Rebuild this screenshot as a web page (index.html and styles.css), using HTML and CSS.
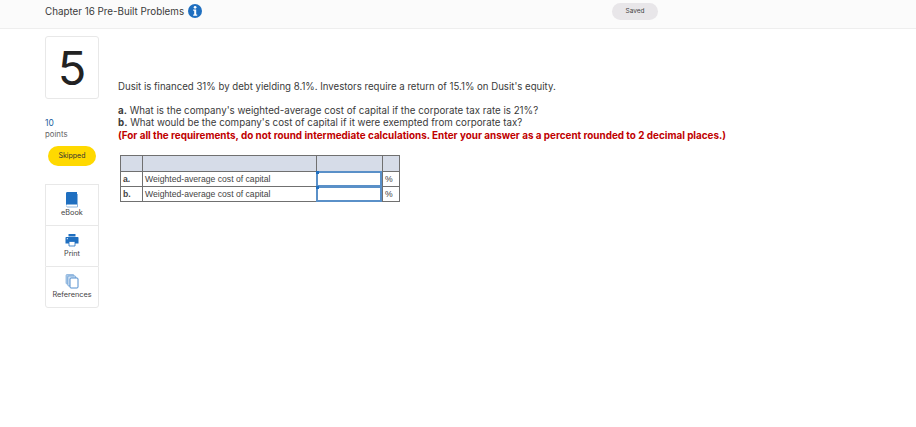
FILE: index.html
```html
<!DOCTYPE html>
<html lang="en">
<head>
<meta charset="utf-8">
<title>Chapter 16 Pre-Built Problems</title>
<link rel="stylesheet" href="styles.css">
</head>
<body>
<header class="topbar">
  <div class="title-group">
    <span class="title">Chapter 16 Pre-Built Problems</span>
    <svg class="info" viewBox="0 0 14 14" aria-hidden="true"><circle cx="7" cy="7" r="7" fill="#1f6fc0"/><circle cx="7.1" cy="3.3" r="1.35" fill="#fff"/><path d="M5.2 5.6h3v4.9h1v1.2H5.2v-1.2h1V6.8h-1z" fill="#fff"/></svg>
  </div>
  <span class="saved">Saved</span>
</header>
<main class="page">
  <aside class="sidebar">
    <div class="number">5</div>
    <div class="points"><span class="points-value">10</span><span class="points-label">points</span></div>
    <div class="status">Skipped</div>
    <nav class="tools">
      <div class="tool">
        <svg class="tool-icon" viewBox="0 0 16 16" aria-hidden="true"><path d="M2 1.400C2 .6 2.600 0 3.300 0H13v12.500H3.300C2.600 12.500 2 13 2 13.700z" fill="#1f6fc0"/><path d="M2.500 13.700c0 .7.400 1.300 1 1.300H13.500V2" fill="none" stroke="#8fb6de" stroke-width="1"/></svg>
        <span>eBook</span>
      </div>
      <div class="tool">
        <svg class="tool-icon" viewBox="0 0 16 16" aria-hidden="true"><path d="M4.500 1h7v2.500h-7z" fill="#1f6fc0"/><path d="M2.500 4h11c.6 0 1 .4 1 1v5.500h-13V5c0-.6.4-1 1-1z" fill="#1f6fc0"/><path d="M5 8.500h6v4.500H5z" fill="#fff" stroke="#1f6fc0" stroke-width=".8"/><circle cx="3.300" cy="5.700" r=".6" fill="#fff"/></svg>
        <span>Print</span>
      </div>
      <div class="tool">
        <svg class="tool-icon" viewBox="0 0 16 16" aria-hidden="true"><rect x="2" y=".5" width="8" height="9.500" rx="1" fill="#a9c8e8" stroke="#8ab2dc" stroke-width=".8"/><rect x="3.800" y="2" width="8" height="10" rx="1" fill="#d5e4f4" stroke="#6a9fd6" stroke-width=".8"/><rect x="6" y="4" width="8" height="10" rx="1" fill="#fff" stroke="#3f82c8" stroke-width=".9"/></svg>
        <span>References</span>
      </div>
    </nav>
  </aside>
  <section class="question">
    <p class="intro">Dusit is financed 31% by debt yielding 8.1%. Investors require a return of 15.1% on Dusit's equity.</p>
    <p class="parts">
      <span class="line"><b>a.</b> What is the company's weighted-average cost of capital if the corporate tax rate is 21%?</span>
      <span class="line"><b>b.</b> What would be the company's cost of capital if it were exempted from corporate tax?</span>
      <span class="line note">(For all the requirements, do not round intermediate calculations. Enter your answer as a percent rounded to 2 decimal places.)</span>
    </p>
    <table class="answers">
      <colgroup><col class="c1"><col class="c2"><col class="c3"><col class="c4"></colgroup>
      <tr class="head"><td></td><td></td><td></td><td></td></tr>
      <tr><td class="key">a.</td><td>Weighted-average cost of capital</td><td class="entry"><span class="field"></span></td><td>%</td></tr>
      <tr><td class="key">b.</td><td>Weighted-average cost of capital</td><td class="entry"><span class="field"></span></td><td>%</td></tr>
    </table>
  </section>
</main>
</body>
</html>
```
FILE: styles.css
```css
* { box-sizing: border-box; }
html, body { margin: 0; padding: 0; }
body {
  width: 916px;
  height: 427px;
  overflow: hidden;
  background: #fff;
  color: #333;
  font-family: "Inter", "Open Sans", sans-serif;
}
.topbar {
  height: 29px;
  padding: 0 258px 0 45px;
  display: flex;
  align-items: center;
  justify-content: space-between;
  background: #fbfbfb;
  border-bottom: 1px solid #eee;
}
.title-group { display: flex; align-items: center; gap: 4px; margin-top: -6px; }
.title { font-size: 9.800px; color: #3a3a3a; }
.info { width: 14px; height: 14px; display: block; }
.saved {
  width: 46px;
  height: 17px;
  margin-top: -6px;
  border-radius: 9px;
  background: #e8e6e9;
  font-size: 6.500px;
  line-height: 17px;
  text-align: center;
  color: #444;
}
.page { display: flex; padding: 7px 0 0 45px; }
.sidebar { width: 54px; display: flex; flex-direction: column; flex: none; }
.number {
  height: 63px;
  border: 1px solid #e8e8e8;
  border-radius: 3px;
  display: flex;
  align-items: center;
  justify-content: center;
  font-size: 47px;
  font-weight: 400;
  line-height: 1;
  color: #222;
}
.points { margin-top: 19px; display: flex; flex-direction: column; line-height: 11px; }
.points-value { font-size: 8.500px; color: #1f5f9e; }
.points-label { font-size: 7.800px; color: #666; }
.status {
  width: 48px;
  height: 20px;
  margin: 6px 0 0 3px;
  border-radius: 10px;
  background: #ffd900;
  font-size: 7px;
  line-height: 20px;
  text-align: center;
  color: #333;
}
.tools { margin-top: 18px; display: flex; flex-direction: column; }
.tool {
  height: 41px;
  border: 1px solid #e8e8e8;
  border-bottom-width: 0;
  display: flex;
  flex-direction: column;
  align-items: center;
  padding-top: 7px;
  font-size: 7.300px;
  color: #444;
}
.tool:last-child { border-bottom-width: 1px; height: 42px; border-radius: 0 0 3px 3px; }
.tool-icon { width: 16px; height: 16px; display: block; margin-bottom: 0; }
.question { padding: 45px 0 0 19px; flex: 1; font-size: 9.650px; line-height: 12px; color: #3a3a3a; }
.intro { margin: 0 0 12px; }
.parts { margin: 0 0 14px; font-size: 9.750px; }
.line { display: block; }
.line b { font-weight: 700; }
.note { font-size: 9.900px; font-weight: 700; color: #c00000; }
.answers {
  margin-left: 2px;
  width: 279px;
  table-layout: fixed;
  border-collapse: collapse;
  font-family: "Liberation Sans", Arial, sans-serif;
  font-size: 8.650px;
  color: #444;
}
.c1 { width: 22px; }
.c2 { width: 174px; }
.c3 { width: 66px; }
.c4 { width: 17px; }
.answers td { border: 1px solid #707070; height: 15px; padding: 0 2px; line-height: 11px; }
.head td { height: 16px; background: #d6dce8; }
.answers .key { font-weight: 700; }
.answers .entry { padding: 0; position: relative; }
.field {
  display: block;
  position: relative;
  height: 16px;
  margin: -1px 0 -1px -1px;
  border: 2px solid #5a90c8;
  background: #fff;
}
.field::before {
  content: "";
  position: absolute;
  left: -2px;
  top: -2px;
  width: 3px;
  height: 3px;
  background: #1f6fc0;
}
```
